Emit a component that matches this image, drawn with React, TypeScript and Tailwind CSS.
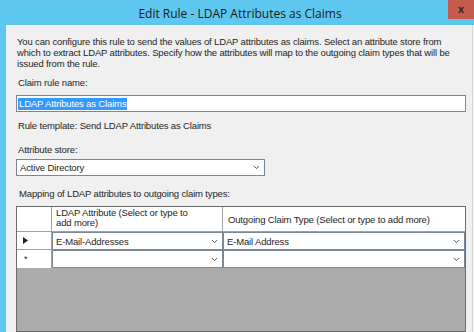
import { ChevronDown } from "lucide-react"

const font = { fontFamily: '"Liberation Sans", Arial, sans-serif' }

function Combo({ value, className = "" }: { value?: string; className?: string }) {
  return (
    <div className={`flex items-center h-full bg-white border border-[#7a8795] pl-[3px] pr-[3px] ${className}`}>
      <span className="flex-1 truncate">{value}</span>
      <ChevronDown size={9} strokeWidth={2.5} className="text-[#444]" />
    </div>
  )
}

export default function App() {
  return (
    <div
      className="w-[474px] h-[332px] overflow-hidden bg-[#5ec7ef] text-[9.5px] leading-[11px] tracking-[-0.15px] text-[#1e1e1e]"
      style={font}
    >
      {/* Title bar */}
      <div className="relative h-[25px] flex items-center justify-center">
        <span
          className="text-[12px] tracking-normal text-[#1a1a1a] mt-[1px] ml-[6px]"
          style={{ fontFamily: '"Open Sans", sans-serif' }}
        >
          Edit Rule - LDAP Attributes as Claims
        </span>
        <div className="absolute right-0 top-0 w-[26px] h-[19px] bg-[#c65a4e] flex items-center justify-center text-[11px] font-bold text-[#222] tracking-normal">
          x
        </div>
      </div>

      <div className="flex h-[307px]">
        <div className="w-[6px]" />
        <div className="flex-1 bg-[#f0f0f0] border-r border-[#d6d6d6] pl-[10px] pr-[4px] pt-[11px] flex flex-col">
          <p className="pl-[1px] pr-[8px]">
            You can configure this rule to send the values of LDAP attributes as claims. Select an attribute store from
            which to extract LDAP attributes. Specify how the attributes will map to the outgoing claim types that will be
            issued from the rule.
          </p>

          <div className="mt-[8px] pl-[2px]">Claim rule name:</div>
          <div className="mt-[7px] h-[17px] w-[450px] bg-white border border-[#7a8795] flex items-center pl-[1px]">
            <span className="bg-[#3399ff] text-white leading-[12px] px-[1px]">LDAP Attributes as Claims</span>
          </div>

          <div className="mt-[8px] pl-[2px]">Rule template: Send LDAP Attributes as Claims</div>

          <div className="mt-[13px] pl-[2px]">Attribute store:</div>
          <div className="mt-[4px] h-[17px] w-[249px]">
            <Combo value="Active Directory" />
          </div>

          <div className="mt-[12px] pl-[3px]">Mapping of LDAP attributes to outgoing claim types:</div>

          {/* Grid */}
          <div className="mt-[7px] w-[450px] flex-1 border border-[#6b6b6b] bg-[#ababab] flex flex-col">
            <div className="grid grid-cols-[35px_171px_1fr] h-[25px] bg-white">
              <div className="border-r border-b border-[#a0a0a0]" />
              <div className="border-r border-b border-[#a0a0a0] pl-[4px] pt-[1px] leading-[10px]">
                LDAP Attribute (Select or type to
                <br />
                add more)
              </div>
              <div className="border-b border-[#a0a0a0] pl-[5px] flex items-center">
                Outgoing Claim Type (Select or type to add more)
              </div>
            </div>
            <div className="grid grid-cols-[35px_171px_1fr] h-[18px] bg-white">
              <div className="border-r border-b border-[#a0a0a0] flex items-center pl-[6px]">
                <svg width="5" height="7" viewBox="0 0 5 7">
                  <path d="M0 0 L5 3.5 L0 7 Z" fill="#222" />
                </svg>
              </div>
              <Combo value="E-Mail-Addresses" className="border-[#4f6f8a]" />
              <Combo value="E-Mail Address" className="border-[#4f6f8a]" />
            </div>
            <div className="grid grid-cols-[35px_171px_1fr] h-[18px] bg-white">
              <div className="border-r border-[#a0a0a0] flex items-center pl-[7px] text-[9px] leading-none">*</div>
              <Combo />
              <Combo />
            </div>
          </div>
        </div>
        <div className="w-[1px] bg-[#f6f6f6]" />
      </div>
    </div>
  )
}
